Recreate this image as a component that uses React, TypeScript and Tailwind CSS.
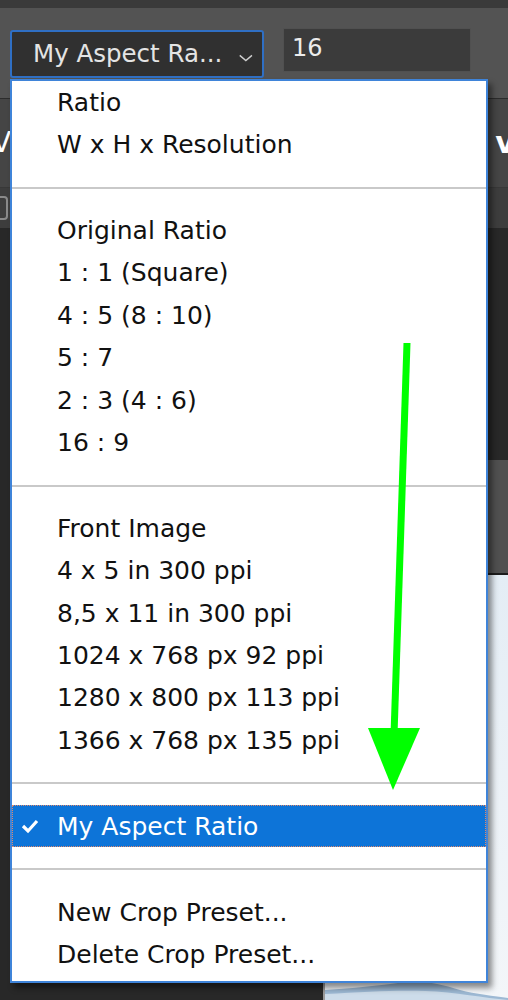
import React from "react";

const sections: string[][] = [
  ["Ratio", "W x H x Resolution"],
  ["Original Ratio", "1 : 1 (Square)", "4 : 5 (8 : 10)", "5 : 7", "2 : 3 (4 : 6)", "16 : 9"],
  ["Front Image", "4 x 5 in 300 ppi", "8,5 x 11 in 300 ppi", "1024 x 768 px 92 ppi", "1280 x 800 px 113 ppi", "1366 x 768 px 135 ppi"],
];

function Separator() {
  return <div className="mt-[21px] mb-[20.5px] h-[2px] bg-[#c9c9c9]" />;
}

function Item({ label }: { label: string }) {
  return (
    <div className="h-[42.4px] flex items-center pl-[45px] text-[25px] leading-none text-[#111111] whitespace-nowrap">
      {label}
    </div>
  );
}

export default function App() {
  return (
    <div className="relative w-[508px] h-[1000px] overflow-hidden bg-[#282828] flex flex-col font-['DejaVu_Sans',sans-serif]">
      <div className="h-[8px] bg-[#3a3a3a]" />

      {/* options bar */}
      <div className="h-[91px] bg-[#535353] border-b border-[#2c2c2c] flex items-start gap-[19px] pl-[10px] pt-[22px]">
        <div className="w-[254px] h-[48px] bg-[#303030] border-2 border-[#2f6fc4] rounded-[3px] flex items-center pl-[21px] pr-[8px]">
          <span className="text-[24.5px] leading-none text-[#e4e4e4] whitespace-nowrap">My Aspect Ra...</span>
          <svg width="18" height="10" viewBox="0 0 18 10" className="ml-[16px] mt-[8px]">
            <polyline points="2,2 9,8 16,2" fill="none" stroke="#cfcfcf" strokeWidth="1.6" />
          </svg>
        </div>
        <div className="w-[188px] h-[44px] -mt-[2px] bg-[#3b3b3b] border border-[#505050] flex items-center pl-[8px]">
          <span className="text-[24px] leading-none text-[#ececec] -mt-[4px]">16</span>
        </div>
      </div>

      {/* panel tabs, mostly hidden behind the menu */}
      <div className="h-[89px] bg-[#454545] border-b border-[#383838] flex items-center overflow-hidden">
        <span className="-ml-[8px] text-[28px] text-white leading-none">V</span>
        <span className="ml-[484px] text-[30px] font-bold text-white leading-none whitespace-nowrap">view</span>
      </div>
      <div className="h-[40px] bg-[#3d3d3d] flex items-center">
        <div className="-ml-[20px] w-[28px] h-[24px] rounded-[4px] border-2 border-[#8a8a8a]" />
      </div>

      {/* workspace */}
      <div className="flex-1 flex">
        <div className="w-[325px] bg-[#282828] border-r-2 border-[#9a9a9a]" />
        <div className="flex-1 flex flex-col">
          <div className="h-[232px] bg-[#282828]" />
          <div className="h-[115px] bg-[#505050] border-b-2 border-[#1c1c1c]" />
          <div className="flex-1 bg-gradient-to-b from-[#e4edf5] to-[#f3f6f9] flex flex-col justify-end">
            <svg width="183" height="24" viewBox="0 0 183 24">
              <path d="M0 14 C30 12 50 10 80 6 C100 4 115 8 135 14 C150 18 170 20 183 22 L183 24 L0 24 Z" fill="#9db9d4" />
              <path d="M0 18 C40 16 70 14 100 15 C130 16 160 22 183 24 L0 24 Z" fill="#cddcea" />
            </svg>
          </div>
        </div>
      </div>

      {/* crop preset menu */}
      <div className="absolute left-[10px] top-[79px] w-[478px] bg-white border-2 border-[#3f84d9] pb-[5px] shadow-[4px_5px_6px_rgba(0,0,0,0.45)]">
        {sections.map((sec, i) => (
          <div key={i}>
            {sec.map((label) => (
              <Item key={label} label={label} />
            ))}
            <Separator />
          </div>
        ))}
        <div className="h-[42.4px] flex items-center bg-[#0d74d8] border border-dotted border-[#e08a6c] text-white">
          <svg width="18" height="16" viewBox="0 0 18 16" className="ml-[8px]">
            <polyline points="2,8 7,13 16,3" fill="none" stroke="#ffffff" strokeWidth="3.2" />
          </svg>
          <span className="ml-[18px] text-[25px] leading-none whitespace-nowrap">My Aspect Ratio</span>
        </div>
        <Separator />
        <Item label="New Crop Preset..." />
        <Item label="Delete Crop Preset..." />
      </div>

      {/* annotation arrow */}
      <svg className="absolute left-0 top-0 pointer-events-none" width="508" height="1000" viewBox="0 0 508 1000">
        <line x1="407" y1="343" x2="394" y2="735" stroke="#00ff00" strokeWidth="7" />
        <polygon points="368,728 420,728 393,790" fill="#00ff00" />
      </svg>
    </div>
  );
}
